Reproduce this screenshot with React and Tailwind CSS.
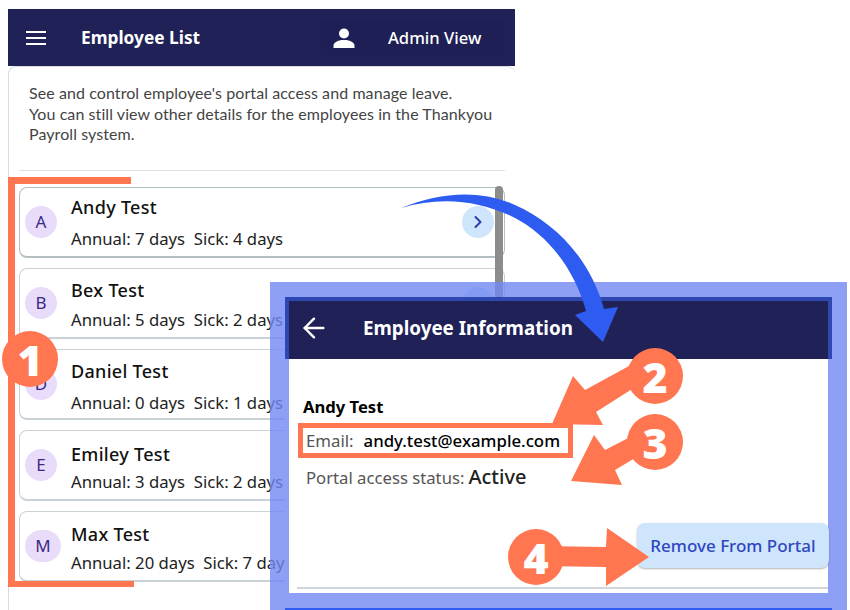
import React from 'react'
import { ArrowLeft, ChevronRight } from 'lucide-react'

const EMPLOYEES = [
  { initial: 'A', name: 'Andy Test', annual: 7, sick: '4 days', nameMt: 'mt-[7px]', statMt: 'mt-[9px]', border: 'border-[#b4bfc4]', circle: 'w-8 mr-[14px]' },
  { initial: 'B', name: 'Bex Test', annual: 5, sick: '2 days', nameMt: 'mt-[9px]', statMt: 'mt-[7px]', border: 'border-[#c9d2d6]', circle: 'w-8 mr-[14px]' },
  { initial: 'D', name: 'Daniel Test', annual: 0, sick: '1 days', nameMt: 'mt-[9px]', statMt: 'mt-[9px]', border: 'border-[#c9d2d6]', circle: 'w-8 mr-[14px]' },
  { initial: 'E', name: 'Emiley Test', annual: 3, sick: '2 days', nameMt: 'mt-[11px]', statMt: 'mt-[5px]', border: 'border-[#c9d2d6]', circle: 'w-8 mr-[14px]' },
  { initial: 'M', name: 'Max Test', annual: 20, sick: '7 days', nameMt: 'mt-[10px]', statMt: 'mt-[6px]', border: 'border-[#c9d2d6]', circle: 'w-[36px] mr-[10px]' },
]

function EmployeeRow({ e }) {
  return (
    <div className={`flex h-[71px] shrink-0 rounded-[8px] border border-b-2 ${e.border} bg-white pr-[10px] pl-[5px]`}>
      <div className={`mt-[18px] flex h-8 ${e.circle} shrink-0 items-center justify-center rounded-full bg-[#e9dcfb] text-[17px] text-[#3b2a84]`}>
        {e.initial}
      </div>
      <div className="min-w-0 flex-1 whitespace-nowrap">
        <div className={`${e.nameMt} text-[18px] leading-[24px] font-medium tracking-[0.3px] text-[#111]`}>{e.name}</div>
        <div className={`${e.statMt} text-[16.700px] leading-[22px] text-[#222]`}>
          Annual: {e.annual} days&nbsp; Sick: {e.sick}
        </div>
      </div>
      <div className="mt-[18px] flex h-8 w-8 shrink-0 items-center justify-center rounded-full bg-[#cfe5fb] text-[#2f3da8]">
        <ChevronRight size={20} strokeWidth={2.4} />
      </div>
    </div>
  )
}

function Badge({ n, className }) {
  return (
    <div className={`absolute flex h-[56px] w-[56px] items-center justify-center rounded-full bg-[#ff7650] text-[43px] leading-none font-black text-white ${className}`}>
      {n}
    </div>
  )
}

export default function App() {
  return (
    <div className="relative h-[610px] w-[850px] overflow-hidden bg-white font-['Noto_Sans',sans-serif]">
      {/* employee list screen */}
      <div className="ml-2 w-[507px] pt-[9px]">
        <header className="flex h-[57px] items-center bg-[#202157] pl-[18px] text-white">
          <svg width="20" height="14" viewBox="0 0 20 14" stroke="currentColor" strokeWidth="2">
            <path d="M0 1h20M0 7h20M0 13h20" />
          </svg>
          <h1 className="ml-[35px] text-[17.300px] font-bold">Employee List</h1>
          <div className="mr-[10px] ml-auto flex h-[34px] w-[184px] items-center bg-[#1e1f54]">
            <svg className="ml-[11px]" width="24" height="24" viewBox="0 0 24 24" fill="currentColor">
              <circle cx="12" cy="7.500" r="5" />
              <path d="M1.500 22v-2.500C1.500 16 7 14 12 14s10.500 2 10.500 5.500V22z" />
            </svg>
            <span className="ml-[32px] pt-[1px] text-[16.600px] font-medium">Admin View</span>
          </div>
        </header>
        <div className="h-[544px] overflow-hidden rounded-t-[8px] border-t border-l border-[#d5dbde] px-[10px]">
          <p className="mt-[16px] pl-[10px] font-['Lato',sans-serif] text-[16px] leading-[20.500px] tracking-[0.08px] whitespace-nowrap text-[#444]">
            See and control employee's portal access and manage leave.
            <br />
            You can still view other details for the employees in the Thankyou
            <br />
            Payroll system.
          </p>
          <div className="mt-[25px] h-px bg-[#dde2e5]" />
          <div className="relative mt-4 flex w-[486px] flex-col gap-[10px]">
            {EMPLOYEES.map((e) => <EmployeeRow key={e.name} e={e} />)}
            <div className="absolute -top-px right-[2px] h-[116px] w-[8px] rounded-t-full bg-[#8c8c8c]" />
          </div>
        </div>
      </div>

      {/* orange bracket round the list */}
      <div className="absolute top-[177px] left-2 h-[410px] w-[123px] border-t-[7px] border-l-[7px] border-[#ff7650]" />
      <div className="absolute top-[581px] left-2 h-[6px] w-[126px] bg-[#ff7650]" />

      {/* employee information screen */}
      <div className="absolute top-[282px] left-[270px] flex h-[328px] w-[577px] flex-col bg-[#7088f3]/80 pt-[15px] pl-[15px]">
        <header className="flex h-[62px] w-[547px] shrink-0 items-center border-x-[4px] border-t-[4px] border-[#2f47b0] bg-[#202157] pb-[4px] pl-[9px] text-white">
          <ArrowLeft size={32} strokeWidth={1.800} />
          <h2 className="ml-[33px] text-[18.800px] font-bold">Employee Information</h2>
        </header>
        <div className="h-[234px] w-[543px] shrink-0 border-l-[4px] border-[#8b9ff5] bg-white pt-[38px] pl-[9px]">
          <div className="ml-[5px] text-[16.600px] leading-[20px] font-bold text-black">Andy Test</div>
          <div className="mt-[6px] flex h-[35px] w-[275px] items-center border-[5px] border-[#ff7650] pl-[3px] text-[16.800px] whitespace-nowrap">
            <span className="text-[#555]">Email:</span>
            <span className="ml-[10px] font-medium text-black">andy.test@example.com</span>
          </div>
          <div className="mt-[7px] ml-[8px] flex items-baseline text-[16.700px] leading-[24px] text-[#555]">
            Portal access status:
            <span className="ml-[4px] text-[20px] font-medium text-[#222]">Active</span>
          </div>
          <div className="mt-[33px] ml-[339px] flex h-[45px] w-[192px] items-center justify-center rounded-[8px] bg-[#cfe5fb] text-[17px] font-medium whitespace-nowrap text-[#2f47c0] shadow-[0_1px_2px_rgba(0,0,0,0.3)]">
            Remove From Portal
          </div>
          <div className="mt-[19px] ml-[-1px] h-[2px] w-[531px] bg-[#cfd5d8]" />
        </div>
        <div className="mt-[15px] h-[4px] w-[547px] shrink-0 bg-[#2f5cf0]" />
      </div>

      {/* annotation arrows */}
      <svg className="pointer-events-none absolute top-0 left-0" width="850" height="610" viewBox="0 0 850 610">
        <path d="M401 208C440 192 480 189 515 205C555 223 590 258 604 309L618 307L603 342L575 315L586 311C575 270 548 235 515 218C480 200 440 196 401 208Z" fill="#2f5cf0" />
        <path d="M573 376L585 390L640 360L640 384L596 412L603 425L552 424Z" fill="#ff7650" />
        <path d="M571 481L594 435L605 450L640 432L640 455L615 470L622 485Z" fill="#ff7650" />
        <path d="M540 546L606 547L607 528L649 557L606 586L606 567L540 566Z" fill="#ff7650" />
      </svg>

      <Badge n="1" className="top-[331px] left-[2px]" />
      <Badge n="2" className="top-[348px] left-[627px]" />
      <Badge n="3" className="top-[414px] left-[627px]" />
      <Badge n="4" className="top-[529px] left-[508px]" />
    </div>
  )
}
